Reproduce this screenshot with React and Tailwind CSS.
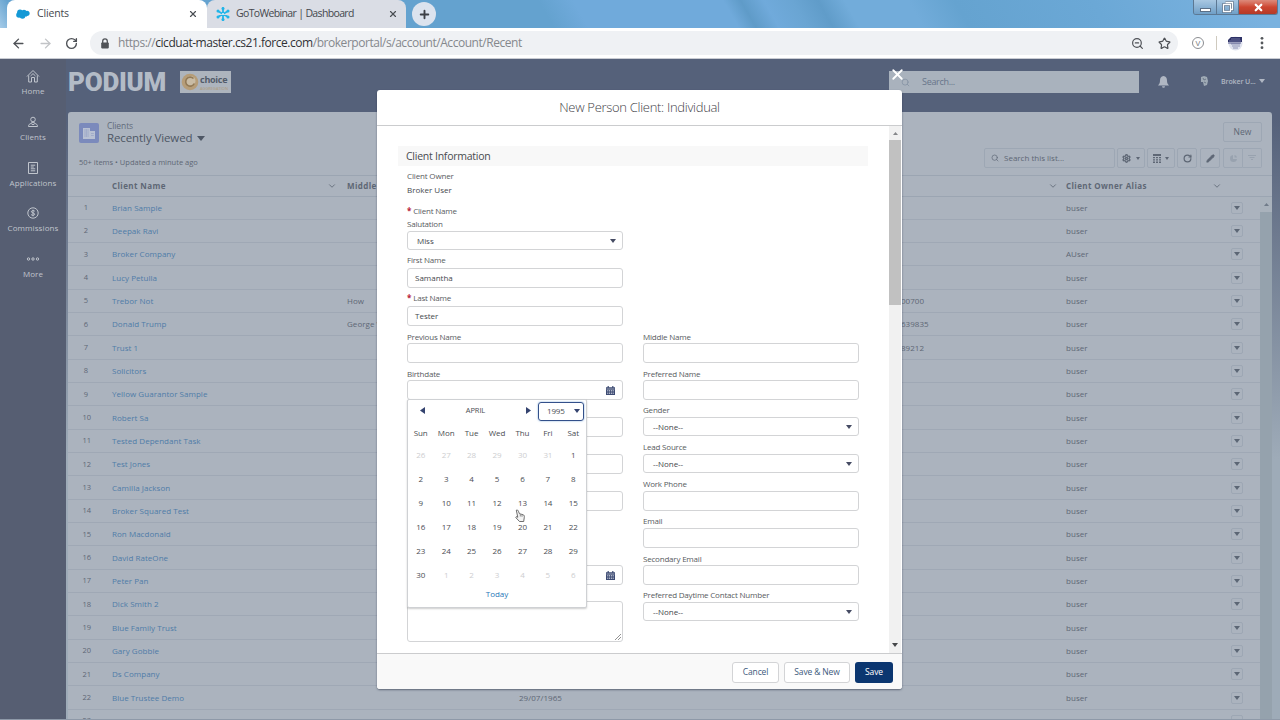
import React from "react";
import { ArrowLeft, ArrowRight, RotateCw, ZoomOut, Star, Search, X, Plus, ChevronDown, Pencil, Settings } from "lucide-react";

const clients = [
  "Brian Sample", "Deepak Ravi", "Broker Company", "Lucy Petulla", "Trebor Not", "Donald Trump",
  "Trust 1", "Solicitors", "Yellow Guarantor Sample", "Robert Sa", "Tested Dependant Task", "Test Jones",
  "Camilla Jackson", "Broker Squared Test", "Ron Macdonald", "David RateOne", "Peter Pan", "Dick Smith 2",
  "Blue Family Trust", "Gary Gobble", "Ds Company", "Blue Trustee Demo", "Sample Testing Co",
];
const middle = { 4: "How", 5: "George W" };
const phone = { 4: "00700", 5: "639835", 6: "89212" };
const born = { 21: "29/07/1965" };

const Tri = ({ className }) => (
  <svg viewBox="0 0 10 6" className={className} preserveAspectRatio="none"><path d="M0 0h10L5 6z" fill="currentColor" /></svg>
);

function Tab({ active, icon, title, className }) {
  return (
    <div className={`flex h-full items-center rounded-t-lg ${active ? "bg-white" : "bg-[#dadde5]"} ${className}`}>
      {icon}
      <span className="flex-1 whitespace-nowrap text-[10.5px] tracking-[-0.65px] text-[#45484d]">{title}</span>
      <X size={10} strokeWidth={2.8} className="text-[#4b4e54]" />
    </div>
  );
}

function Browser() {
  return (
    <>
      <div className="flex h-7 shrink-0 bg-[linear-gradient(60deg,#a5cbe8_0px,#64a2cf_20px,#64a2cf_480px,#70aadb_510px,#70aadb_640px,#5f9bc8_655px,#70aadb_675px,#6aa5d3_700px,#609cc9_722px,#72acda_745px,#72acda_800px,#65a3d0_840px,#6ba8d6_960px,#7ab2df_1100px)]">
        <Tab
          active
          className="ml-[7px] w-[200px] pl-[9px] pr-[9px]"
          title={<span className="tracking-[-0.15px]">Clients</span>}
          icon={
            <svg width="14" height="10" viewBox="0 0 14 10" className="mr-[7px]">
              <g fill="#1499d6"><circle cx="4" cy="3.4" r="2.9" /><circle cx="8" cy="3.2" r="2.4" /><circle cx="11" cy="4.3" r="2.6" /><circle cx="3" cy="6" r="2.8" /><circle cx="6.5" cy="6.8" r="2.9" /><rect x="3" y="3" width="8" height="4.5" /></g>
            </svg>
          }
        />
        <Tab
          className="w-[199px] pl-[9px] pr-[8px]"
          title="GoToWebinar | Dashboard"
          icon={
            <svg width="14" height="14" viewBox="0 0 14 14" className="mr-[6px]">
              <g stroke="#20b4e8" strokeWidth="1.8" strokeLinecap="round"><path d="M7 1v12M1.8 4l10.4 6M12.2 4L1.8 10" /></g>
              <g fill="#20b4e8"><circle cx="7" cy="1.6" r="1.5" /><circle cx="7" cy="12.4" r="1.5" /><circle cx="2" cy="4.1" r="1.5" /><circle cx="12" cy="9.9" r="1.5" /><circle cx="12" cy="4.1" r="1.5" /><circle cx="2" cy="9.9" r="1.5" /></g>
              <circle cx="7" cy="7" r="1" fill="#e8f4fb" />
            </svg>
          }
        />
        <div className="ml-[6px] mt-[2px] flex size-6 items-center justify-center rounded-full bg-[#dce3ee] text-[#3d4046]"><Plus size={13} strokeWidth={3.5} /></div>
        <div className="ml-auto mr-[2px] flex h-[15px] overflow-hidden rounded-b-[3px] border border-t-0 border-[#5c7893] text-white">
          <div className="flex w-[23px] items-center justify-center border-r border-[#5c7893] bg-linear-to-b from-[#a9c8e2] to-[#6f9fc7]"><div className="mt-[5px] h-[4px] w-[11px] border border-[#5b6f86] bg-white" /></div>
          <div className="flex w-[22px] items-center justify-center border-r border-[#5c7893] bg-linear-to-b from-[#a9c8e2] to-[#6f9fc7]">
            <svg width="12" height="12" viewBox="0 0 12 12" fill="none"><path d="M3.5 1.5h7v7h-2M1.5 3.5h7v7h-7z" stroke="#4c6078" strokeWidth="2.4" /><path d="M3.5 1.5h7v7h-2M1.5 3.5h7v7h-7z" stroke="#fff" strokeWidth="1.3" /></svg>
          </div>
          <div className="flex w-[38px] items-center justify-center bg-linear-to-b from-[#dc8a7b] via-[#cd4631] to-[#b53a27]"><X size={11} strokeWidth={5} /></div>
        </div>
      </div>
      <div className="flex h-[31px] shrink-0 items-center border-b border-[#c9ccd3] bg-white text-[#4e5156]">
        <ArrowLeft size={15} strokeWidth={2.2} className="ml-[11px]" />
        <ArrowRight size={15} strokeWidth={2.2} className="ml-[12px] text-[#c2c4c7]" />
        <RotateCw size={13} strokeWidth={2.5} className="ml-[12px]" />
        <div className="ml-[12px] flex h-6 w-[1088px] items-center rounded-full bg-[#eff1f4] pl-[10px] text-[12px] text-[#85888d]">
          <svg width="10" height="11" viewBox="0 0 10 11" className="mr-[8px]"><path d="M2.7 5V3.2a2.3 2.3 0 0 1 4.6 0V5" stroke="#505357" strokeWidth="1.3" fill="none" /><rect x="1.2" y="4.4" width="7.6" height="6" rx=".8" fill="#505357" /></svg>
          <span className="flex-1 whitespace-nowrap tracking-[-0.46px]">https://<span className="text-[#303236]">cicduat-master.cs21.force.com</span>/brokerportal/s/account/Account/Recent</span>
          <ZoomOut size={13} strokeWidth={2.2} className="mr-[14px] text-[#4e5156]" />
          <Star size={13} strokeWidth={2.2} className="mr-[7px] text-[#4e5156]" />
        </div>
        <div className="ml-[14px] flex size-[12px] items-center justify-center rounded-full border border-[#8b8d91] text-[8px] leading-none text-[#77797d]">V</div>
        <div className="ml-[12px] h-[14px] w-px bg-[#cfcabf]" />
        <svg width="16" height="16" viewBox="0 0 16 16" className="ml-[10px]">
          <circle cx="8.5" cy="8.5" r="7" fill="#dfe2ee" /><path d="M1 5l3-3h11v5H1z" fill="#2d3166" /><path d="M4 4h9M2 6h12" stroke="#7d83ad" strokeWidth=".8" /><path d="M4 9h9M5 11h8M6 13h5" stroke="#8d92b5" strokeWidth="1" /><path d="M1 8h13" stroke="#52578a" />
        </svg>
        <svg width="4" height="14" viewBox="0 0 4 14" className="ml-[17px]"><g fill="#55585c"><circle cx="2" cy="2.3" r="1.4" /><circle cx="2" cy="7" r="1.4" /><circle cx="2" cy="11.7" r="1.4" /></g></svg>
      </div>
    </>
  );
}

const navIcons = {
  Home: <path d="M1 7.5L7 1.5l6 6M2.7 6.5V13h2.8V8.5h3V13h2.8V6.5M4.5 7L7 4.6 9.5 7" />,
  Clients: <path d="M7 2.2a2.3 2.3 0 1 1 0 4.6 2.3 2.3 0 0 1 0-4.6zM5.3 7.6h3.4M2.5 11.5c0-2 1.2-2.7 2.6-3l1.9 1.3 1.9-1.3c1.4.3 2.6 1 2.6 3z" />,
  Applications: <path d="M2.5 1.5h9v11h-9zM4.8 4.2h4.4M4.8 6h3M4.8 7.8h4.4M4.8 9.8h4.4" />,
  Commissions: <path d="M7 1.8a5.2 5.2 0 1 1 0 10.4A5.2 5.2 0 0 1 7 1.8zM8.8 5.2C7.8 4.2 5.3 4.4 5.4 5.8c.1 1.5 3.3.9 3.3 2.4 0 1.4-2.6 1.5-3.6.4M7 3.7v6.6" />,
  More: <><circle cx="2.5" cy="7" r="1.2" /><circle cx="7" cy="7" r="1.2" /><circle cx="11.5" cy="7" r="1.2" /></>,
};

function Sidebar() {
  return (
    <nav className="flex w-[66px] shrink-0 flex-col bg-[#565e72] pt-[10px] text-[#c0c5cd]">
      {Object.keys(navIcons).map((n) => (
        <div key={n} className="flex h-[45.8px] flex-col items-center">
          <svg width="14" height="14" viewBox="0 0 14 14" fill="none" stroke="currentColor" strokeWidth="1">{navIcons[n]}</svg>
          <span className="mt-[2px] text-[8px] leading-3 tracking-[0.1px]">{n}</span>
        </div>
      ))}
    </nav>
  );
}

function Header() {
  return (
    <header className="flex h-[53px] shrink-0 items-start bg-[#55617a]">
      <div className="ml-[2px] mt-[9px] w-[97px] whitespace-nowrap font-[Roboto] text-[26px] font-black leading-[29px] tracking-[-0.25px] text-[#b3bbc6]">PODIUM</div>
      <div className="ml-[15px] mt-[12px] flex h-[22px] w-[51px] items-center bg-[#adb4bd]">
        <svg width="20" height="20" viewBox="0 0 20 20"><circle cx="10" cy="10" r="8.3" fill="#b69d78" /><circle cx="10.5" cy="9" r="5" fill="#c9bca5" /><path d="M13.5 6.5a4.5 4.5 0 1 0 .8 5" fill="none" stroke="#927a57" strokeWidth="1.6" /></svg>
        <div className="flex flex-col"><span className="text-[9px] font-bold leading-[12px] tracking-[-0.25px] text-[#525b69]">choice</span><span className="text-[4px] leading-[5px] text-[#b09b79]">AGGREGATION</span></div>
      </div>
      <div className="ml-auto mt-[12px] flex h-[22px] w-[250px] items-center bg-[#a9b2bd] text-[9px] text-[#68758a]">
        <Search size={9} strokeWidth={2} className="ml-[12px] text-[#8390a2]" /><span className="ml-[12px] tracking-[-0.3px]">Search...</span>
      </div>
      <svg width="11" height="12" viewBox="0 0 11 12" className="ml-[19px] mt-[17px]"><path d="M5.500 0C3 .3 2 2 2 4.500 2 7 1.500 7.800 0 9.500h11C9.500 7.800 9 7 9 4.500 9 2 8 .3 5.500 0zM4 10.300h3a1.500 1.500 0 0 1-3 0z" fill="#b0b7c3" /></svg>
      <svg width="9" height="11" viewBox="0 0 9 11" className="ml-[31px] mt-[17px]"><path d="M1 1l3-1 3 1 1 4-1 4-3 1-1-4H1z" fill="#9faab5" /><path d="M3 2l1 2 2-1M4 6l2 1" stroke="#6c7888" fill="none" /></svg>
      <span className="ml-[12px] mt-[17px] w-[35px] whitespace-nowrap text-[7px] font-semibold leading-3 tracking-[-0.1px] text-[#b0b7c3]">Broker U...</span>
      <Tri className="ml-[3px] mr-[15px] mt-[20px] h-[4px] w-[6px] text-[#b0b7c3]" />
    </header>
  );
}

const btn = "flex h-5 items-center justify-center rounded-[2px] border border-[#9da7b4]";

function ListView() {
  return (
    <section className="ml-[2px] mr-2 flex min-h-0 flex-1 flex-col overflow-hidden rounded-t-[3px] bg-[#abb3be] text-[8px] text-[#5e6775]">
      <div className="flex h-[64px] shrink-0 justify-between border-b border-[#9ba5b2]">
        <div className="pl-[11px] pt-[8px]">
          <div className="flex">
            <div className="mt-[3px] flex size-5 items-center justify-center rounded-[2px] bg-[#7b8abc]">
              <svg width="12" height="11" viewBox="0 0 12 11" fill="#b9c1d3"><path d="M0 0h7v3h5v8H0z" /><path d="M1.500 2h4M1.500 4h4M1.500 6h4M1.500 8h4M8.500 5.500h2M8.500 7.500h2" stroke="#7b8abc" strokeWidth=".8" strokeDasharray="1 .6" /></svg>
            </div>
            <div className="ml-[8px]">
              <div className="text-[8.500px] leading-3 tracking-[-0.1px] text-[#626c7b]">Clients</div>
              <div className="flex items-center text-[11.500px] leading-3 text-[#4e5765]"><span className="w-[90px] whitespace-nowrap tracking-[-0.1px]">Recently Viewed</span><Tri className="h-[5px] w-[8px]" /></div>
            </div>
          </div>
          <div className="mt-[12px] text-[7.500px] leading-3">50+ items • Updated a minute ago</div>
        </div>
        <div className="flex flex-col items-end pr-[10px] pt-[10px]">
          <div className={`${btn} w-[39px] text-[8.500px]`}>New</div>
          <div className="mt-[6px] flex">
            <div className="flex h-5 w-[131px] items-center rounded-[2px] border border-[#9da7b4] pl-[6px]"><Search size={8} /><span className="ml-[5px]">Search this list...</span></div>
            <div className={`${btn} ml-[2px] w-[28px] gap-[5px]`}><Settings size={9} strokeWidth={3.500} /><Tri className="h-[3px] w-[4px]" /></div>
            <div className={`${btn} ml-[2px] w-[28px] gap-[4px]`}>
              <svg width="8" height="9" viewBox="0 0 8 9" fill="currentColor"><path d="M0 0h8v2H0zM0 3h2v1.300H0zM3 3h2v1.300H3zM6 3h2v1.300H6zM0 5.200h2v1.300H0zM3 5.200h2v1.300H3zM6 5.200h2v1.300H6zM0 7.500h2V9H0zM3 7.500h2V9H3zM6 7.500h2V9H6z" /></svg>
              <Tri className="h-[3px] w-[4px]" />
            </div>
            <div className={`${btn} ml-[2px] w-[20px]`}><RotateCw size={9} strokeWidth={3.200} /></div>
            <div className={`${btn} ml-[3px] w-[20px]`}><Pencil size={9} strokeWidth={2} fill="currentColor" /></div>
            <div className={`${btn} ml-[3px] w-[20px] rounded-r-none text-[#98a2af]`}><svg width="7" height="7" viewBox="0 0 7 7"><path d="M3 0a3.500 3.500 0 1 0 4 4H3zM4.500 0v2.500H7A3 3 0 0 0 4.500 0z" fill="currentColor" /></svg></div>
            <div className={`${btn} w-[19px] rounded-l-none border-l-0 text-[#98a2af]`}><svg width="8" height="6" viewBox="0 0 8 6"><path d="M0 .5h8M1.500 2.500h5M3 4.500h2" stroke="currentColor" /></svg></div>
          </div>
        </div>
      </div>
      <div className="flex h-[20.500px] shrink-0 items-center border-b border-[#9ba5b2] font-bold tracking-[0.4px]">
        <span className="ml-[44px] w-[215px]">Client Name</span><ChevronDown size={10} />
        <span className="ml-[10px] w-[170px]">Middle Name</span>
        <span className="w-[462px]">Birthdate</span>
        <ChevronDown size={10} className="ml-[69px]" />
        <span className="ml-[8px] w-[146px] whitespace-nowrap">Client Owner Alias</span><ChevronDown size={10} />
      </div>
      <div className="flex min-h-0 flex-1 overflow-hidden">
        <div className="flex w-[1192px] flex-col">
          {clients.map((n, i) => (
            <div key={n} className="flex h-[23.330px] shrink-0 items-center border-b border-[#9fa8b5] tracking-[0.04px]">
              <span className={`w-[23px] text-right text-[7.500px] tracking-[-0.1px] ${i < 9 ? "pr-[3px]" : ""}`}>{i + 1}</span>
              <span className="ml-[21px] w-[235px] text-[#4f7ca8]">{n}</span>
              <span className="w-[172px]">{middle[i]}</span>
              <span className="w-[382px]">{born[i]}</span>
              <span className="w-[165px]">{phone[i]}</span>
              <span className="w-[165px]">{i === 2 ? "AUser" : "buser"}</span>
              <span className="flex size-[12px] items-center justify-center rounded-[2px] border border-[#9da7b4] text-[#5c6675]"><Tri className="h-[4px] w-[6px]" /></span>
            </div>
          ))}
        </div>
        <div className="flex w-[12px] flex-col items-center bg-[#95a2ad]">
          <div className="flex h-[15px] w-full items-center justify-center bg-[#a9b2bc]"><Tri className="h-[3px] w-[5px] rotate-180 text-[#707b89]" /></div>
        </div>
      </div>
    </section>
  );
}

const CalIcon = () => (
  <svg width="9" height="9" viewBox="0 0 9 9"><path d="M0 1.200h9V9H0zM1.600 0h1.200v2H1.600zM6.200 0h1.200v2H6.200z" fill="#3d4b73" /><path d="M1.300 4.500h6.400M1.300 6h6.400M1.300 7.500h6.400" stroke="#dfe3ec" strokeWidth=".8" strokeDasharray="1 .8" /><path d="M.5 3h8" stroke="#fff" strokeWidth=".5" /></svg>
);

const Required = () => <b className="mr-[2px] text-[8px] text-[#b8233a]">*</b>;

function Field({ label, required, value, type, gap = "pt-[5px]" }) {
  return (
    <div className={`flex flex-col ${gap}`}>
      <label className="h-3 whitespace-nowrap leading-3 tracking-[-0.2px]">{required && <Required />}{label}</label>
      {type === "select" ? (
        <div className="mt-px flex h-[19px] items-center justify-between rounded-[3px] border border-[#d3d4d6] bg-white pl-[9px] pr-[6px] text-[#45484d]"><span className="tracking-[-0.05px]">{value}</span><Tri className="h-[4px] w-[6px] text-[#454b63]" /></div>
      ) : (
        <div className="mt-auto flex h-[20px] items-center justify-between rounded-[3px] border border-[#d3d4d6] bg-white pl-[7px] pr-[7px] text-[#45484d]"><span>{value}</span>{type === "date" && <CalIcon />}</div>
      )}
    </div>
  );
}

const days = [26, 27, 28, 29, 30, 31, ...Array.from({ length: 30 }, (_, i) => i + 1), 1, 2, 3, 4, 5, 6];

function Calendar() {
  return (
    <div className="absolute left-0 top-[73px] z-10 h-[209px] w-[180px] rounded-[2px] border border-[#cfd1d4] bg-white text-[#4a4d52] shadow-[0_1px_2px_rgba(0,0,0,0.2)]">
      <div className="flex h-[22px] items-center">
        <Tri className="-mt-[2px] ml-[11px] h-[5px] w-[7px] rotate-90 text-[#34436f]" />
        <span className="flex-1 text-center text-[7.500px] tracking-[-0.1px]">APRIL</span>
        <Tri className="-mt-[2px] h-[5px] w-[7px] -rotate-90 text-[#34436f]" />
        <div className="ml-[6px] mr-[2px] flex h-[19px] w-[46px] items-center justify-between rounded-[3px] border border-[#33508a] pl-[8px] pr-[3px] shadow-[0_0_2px_#7ba7d8]"><span className="tracking-[-0.15px]">1995</span><Tri className="h-[4px] w-[6px] text-[#34436f]" /></div>
      </div>
      <div className="grid h-[22px] grid-cols-7 items-center text-center tracking-[-0.05px]">{["Sun", "Mon", "Tue", "Wed", "Thu", "Fri", "Sat"].map((d) => <span key={d}>{d}</span>)}</div>
      <div className="-mt-px grid auto-rows-[24px] grid-cols-7 items-center text-center tracking-[-0.1px]">
        {days.map((d, i) => <span key={i} className={i < 6 || i > 35 ? "text-[#cdced0]" : ""}>{d}</span>)}
      </div>
      <div className="mt-px text-center leading-3 tracking-[-0.05px] text-[#1f77b8]">Today</div>
    </div>
  );
}

function Modal() {
  return (
    <div className="absolute left-[377px] top-[90px] flex h-[599px] w-[525px] flex-col rounded-[3px] bg-white text-[8px] text-[#585b60] shadow-[0_1px_2px_rgba(40,50,70,0.6)]">
      <X size={17} strokeWidth={2.6} className="absolute -top-[24px] left-[512px] text-white" />
      <div className="flex h-9 shrink-0 items-center justify-center border-b border-[#cbccce] text-[13px] font-light tracking-[-0.3px] text-[#3f4247]">New Person Client: Individual</div>
      <div className="flex min-h-0 flex-1">
        <div className="w-[512px] overflow-hidden pt-[20px]">
          <div className="ml-[21px] flex h-[20px] w-[470px] items-center bg-[#f8f8f8] pl-[8px] pt-px text-[10.500px] tracking-[-0.25px] text-[#484b50]">Client Information</div>
          <div className="ml-[30px] w-[216px] pt-[4px]">
            <div className="leading-3 tracking-[-0.15px]">Client Owner</div>
            <div className="mt-[2px] leading-3 text-[#45484d]">Broker User</div>
            <div className="mt-[9px] leading-3 tracking-[-0.2px]"><Required />Client Name</div>
            <Field label="Salutation" type="select" value="Miss" gap="pt-[1px]" />
            <Field label="First Name" value="Samantha" gap="h-[38px] pt-[4px]" />
            <Field label="Last Name" value="Tester" required gap="h-[38px] pt-[4px]" />
          </div>
          <div className="ml-[30px] grid w-[452px] grid-cols-2 gap-x-5">
            <div className="relative">
              <Field label="Previous Name" />
              <Field label="Birthdate" type="date" />
              <Calendar />
              <Field />
              <Field />
              <Field />
              <Field type="date" gap="pt-[42px]" />
              <div className="mt-[16px] flex h-[41px] items-end justify-end rounded-[3px] border border-[#d3d4d6]"><svg width="8" height="8" viewBox="0 0 8 8"><path d="M1 7l6-6M4 7l3-3" stroke="#777" strokeWidth=".8" /></svg></div>
            </div>
            <div>
              <Field label="Middle Name" />
              <Field label="Preferred Name" />
              <Field label="Gender" type="select" value="--None--" gap="h-[37px] pt-[4px]" />
              <Field label="Lead Source" type="select" value="--None--" gap="h-[37px] pt-[4px]" />
              <Field label="Work Phone" gap="h-[37px] pt-[4px]" />
              <Field label="Email" gap="h-[37px] pt-[4px]" />
              <Field label="Secondary Email" />
              <Field label="Preferred Daytime Contact Number" type="select" value="--None--" gap="pt-[4px]" />
            </div>
          </div>
        </div>
        <div className="flex w-[12px] flex-col items-center justify-between bg-[#f1f1f1]">
          <div className="flex w-full flex-col items-center"><div className="flex h-[14px] items-center"><Tri className="h-[3px] w-[5px] rotate-180 text-[#85878a]" /></div><div className="h-[165px] w-full bg-[#c1c1c1]" /></div>
          <Tri className="mb-[6px] h-[4px] w-[6px] text-[#45474a]" />
        </div>
      </div>
      <div className="flex h-9 shrink-0 items-center justify-end gap-[5px] rounded-b-[3px] border-t border-[#cbccce] bg-[#f9f9f9] pr-[9px] pt-px text-[8.500px] tracking-[-0.15px] text-[#3d5a7c]">
        <div className="flex h-[21px] w-[47px] items-center justify-center rounded-[3px] border border-[#d3d4d6] bg-white">Cancel</div>
        <div className="flex h-[21px] w-[66px] items-center justify-center rounded-[3px] border border-[#d3d4d6] bg-white">Save &amp; New</div>
        <div className="flex h-[21px] w-[38px] items-center justify-center rounded-[3px] bg-[#0b3670] text-white">Save</div>
      </div>
    </div>
  );
}

export default function App() {
  return (
    <div className="relative flex h-[720px] w-[1280px] flex-col overflow-hidden bg-white font-['Open_Sans','Noto_Sans',sans-serif]">
      <Browser />
      <div className="flex min-h-0 flex-1 border-b border-[#8e99a8]">
        <Sidebar />
        <main className="flex min-w-0 flex-1 flex-col bg-[linear-gradient(#55617a_60px,#9eabb8_400px)]">
          <Header />
          <ListView />
        </main>
      </div>
      <Modal />
      <svg width="10" height="14" viewBox="0 0 10 14" className="absolute left-[515px] top-[509px] z-20"><path d="M1.300 1.200c1-.7 1.800.1 2.200 1.200l.9 2.300 3.600 1c1.200.4 1.500 1.300 1.300 2.600L8.700 12.500H4.500L1 8.800c-.6-.9.500-1.500 1.200-.9l.6.4z" fill="#f4f4f4" stroke="#4a4a4a" strokeWidth=".8" /><path d="M5.300 5.500v2M7 6v1.800" stroke="#4a4a4a" strokeWidth=".6" /></svg>
    </div>
  );
}
